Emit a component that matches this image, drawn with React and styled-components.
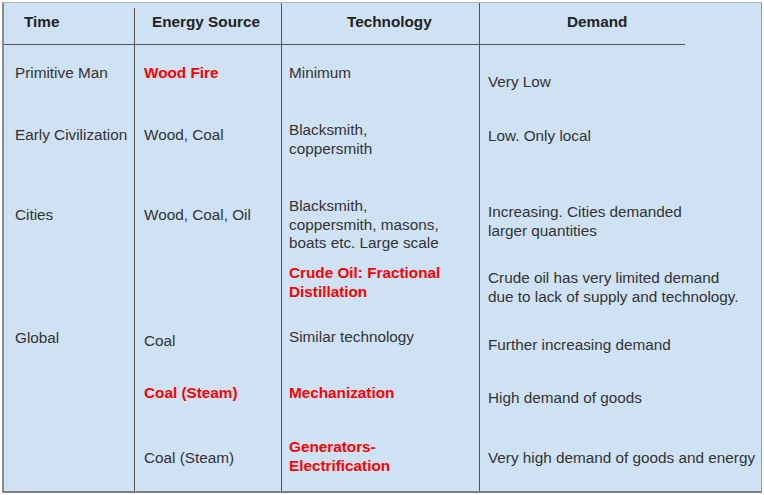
import React from "react";
import styled, { createGlobalStyle } from "styled-components";

const GlobalStyle = createGlobalStyle`
  html, body {
    margin: 0;
    padding: 0;
    background: #ffffff;
  }
  body {
    font-family: "Liberation Sans", Arial, sans-serif;
  }
`;

const LINE = "#555";
const COLS = [130, 147, 198, 281];
const PAD = [11, 9, 7, 8];

const Frame = styled.div`
  margin: 2px 0 0 2px;
  width: 760px;
  height: 491px;
  box-sizing: border-box;
  background: #cfe2f3;
  border-top: 1px solid #b4b4b4;
  border-right: 1px solid #9a9a9a;
  border-left: 2px solid #8a8a8a;
  border-bottom: 2px solid #808080;
  display: grid;
  grid-template-columns: ${COLS.map((c) => `${c}px`).join(" ")};
  grid-template-rows: 42px 60px 80px 73px 60px 52px 55px 1fr;
`;

const HeadCell = styled.div`
  box-sizing: border-box;
  padding: 10px 0 0 ${({ $pad }) => $pad}px;
  font-size: 15.3px;
  line-height: 18px;
  font-weight: 700;
  color: #222;
  white-space: nowrap;
  border-left: ${({ $divider }) => ($divider ? `1px solid ${LINE}` : "none")};
  border-bottom: ${({ $rule }) => ($rule ? `1px solid ${LINE}` : "none")};
  background-image: ${({ $shortRule, $lateDivider }) =>
    [
      $shortRule ? `linear-gradient(${LINE}, ${LINE})` : null,
      $lateDivider ? `linear-gradient(${LINE}, ${LINE})` : null,
    ]
      .filter(Boolean)
      .join(", ") || "none"};
  background-repeat: no-repeat;
  background-position: ${({ $shortRule, $lateDivider }) =>
    [$shortRule ? "left bottom" : null, $lateDivider ? "left 5px" : null]
      .filter(Boolean)
      .join(", ") || "0 0"};
  background-size: ${({ $shortRule, $lateDivider }) =>
    [$shortRule ? `${$shortRule}px 1px` : null, $lateDivider ? "1px 100%" : null]
      .filter(Boolean)
      .join(", ") || "auto"};
`;

const Cell = styled.div`
  box-sizing: border-box;
  padding: ${({ $top }) => $top}px 4px 0 ${({ $pad }) => $pad}px;
  border-left: ${({ $divider }) => ($divider ? `1px solid ${LINE}` : "none")};
`;

const Text = styled.div`
  font-size: 15.3px;
  line-height: 18.5px;
  color: ${({ $red }) => ($red ? "#ff0000" : "#333")};
  font-weight: ${({ $red }) => ($red ? 700 : 400)};
  white-space: nowrap;
`;

const headers = [
  { label: "Time", pad: 20 },
  { label: "Energy Source", pad: 18 },
  { label: "Technology", pad: 65 },
  { label: "Demand", pad: 87 },
];

const rows = [
  [
    { lines: ["Primitive Man"], top: 19 },
    { lines: ["Wood Fire"], top: 19, red: true },
    { lines: ["Minimum"], top: 19 },
    { lines: ["Very Low"], top: 28 },
  ],
  [
    { lines: ["Early Civilization"], top: 21 },
    { lines: ["Wood, Coal"], top: 21 },
    { lines: ["Blacksmith,", "coppersmith"], top: 16 },
    { lines: ["Low. Only local"], top: 22 },
  ],
  [
    { lines: ["Cities"], top: 21 },
    { lines: ["Wood, Coal, Oil"], top: 21 },
    { lines: ["Blacksmith,", "coppersmith, masons,", "boats etc. Large scale"], top: 12 },
    { lines: ["Increasing. Cities demanded", "larger quantities"], top: 18 },
  ],
  [
    { lines: [], top: 0 },
    { lines: [], top: 0 },
    { lines: ["Crude Oil: Fractional", "Distillation"], top: 6, red: true },
    { lines: ["Crude oil has very limited demand", "due to lack of supply and technology."], top: 11 },
  ],
  [
    { lines: ["Global"], top: 11 },
    { lines: ["Coal"], top: 14 },
    { lines: ["Similar technology"], top: 10 },
    { lines: ["Further increasing demand"], top: 18 },
  ],
  [
    { lines: [], top: 0 },
    { lines: ["Coal (Steam)"], top: 14, red: true },
    { lines: ["Mechanization"], top: 14, red: true },
    { lines: ["High demand of goods"], top: 19 },
  ],
  [
    { lines: [], top: 0 },
    { lines: ["Coal (Steam)"], top: 24 },
    { lines: ["Generators-", "Electrification"], top: 13, red: true },
    { lines: ["Very high demand of goods and energy"], top: 24 },
  ],
];

export default function App() {
  return (
    <>
      <GlobalStyle />
      <Frame>
        {headers.map((h, i) => (
          <HeadCell
            key={h.label}
            $pad={h.pad}
            $divider={i > 1}
            $lateDivider={i === 1}
            $rule={i < 3}
            $shortRule={i === 3 ? 205 : 0}
          >
            {h.label}
          </HeadCell>
        ))}
        {rows.map((row, r) =>
          row.map((cell, c) => (
            <Cell key={`${r}-${c}`} $top={cell.top} $pad={PAD[c]} $divider={c > 0}>
              {cell.lines.map((line) => (
                <Text key={line} $red={cell.red}>
                  {line}
                </Text>
              ))}
            </Cell>
          ))
        )}
      </Frame>
    </>
  );
}
